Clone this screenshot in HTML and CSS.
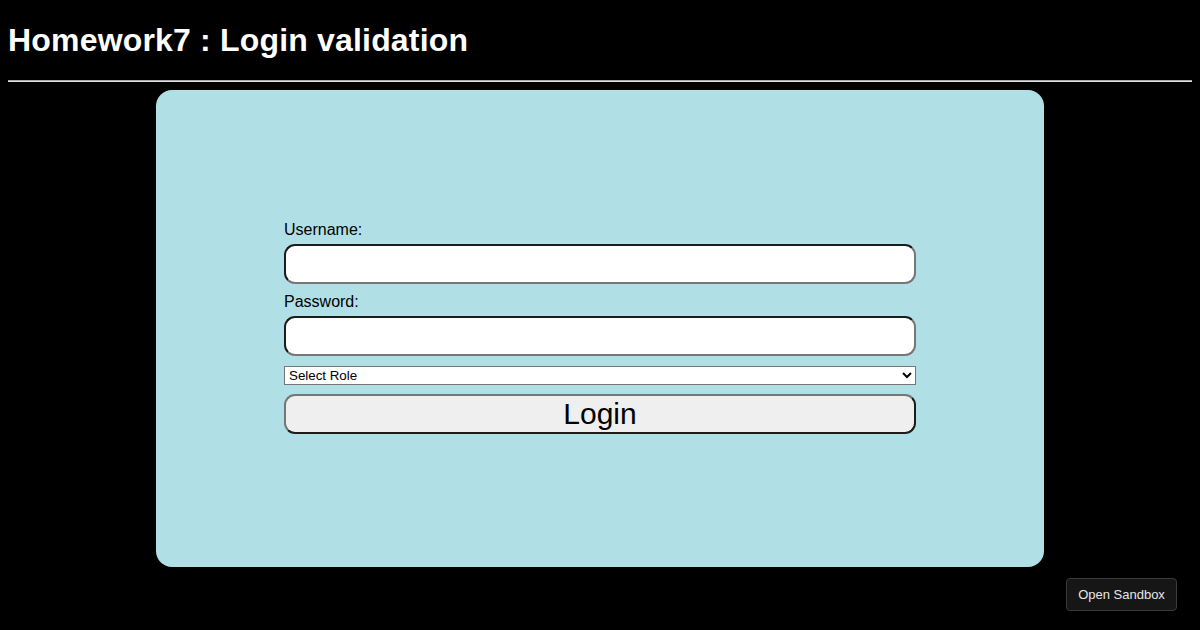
FILE: index.html
```html
<!DOCTYPE html>
<html lang="en">
<head>
<meta charset="utf-8">
<title>Homework7 : Login validation</title>
<link rel="stylesheet" href="styles.css">
</head>
<body>
<h1 class="title">Homework7 : Login validation</h1>
<hr class="rule">
<div class="card">
  <form class="login-form">
    <label class="field-label" for="username">Username:</label>
    <input class="field-input" id="username" type="text">
    <label class="field-label" for="password">Password:</label>
    <input class="field-input" id="password" type="password">
    <select class="role-select">
      <option>Select Role</option>
      <option>Admin</option>
      <option>User</option>
    </select>
    <button class="login-btn" type="button">Login</button>
  </form>
</div>
<a class="sandbox-btn">Open Sandbox</a>
</body>
</html>
```
FILE: styles.css
```css
body {
  margin: 8px;
  background: #000;
  color: #fff;
  font-family: "Liberation Sans", Arial, sans-serif;
}

.title {
  font-size: 32px;
  font-weight: bold;
  letter-spacing: 0.18px;
  margin: 13.5px 0 21.44px;
}

.rule {
  margin: 8px 0;
  border: 0;
  border-top: 1px solid #a8a8a8;
  border-bottom: 1px solid #e0e0e0;
  height: 0;
}

.card {
  width: 75%;
  margin: 0 auto;
  height: 477px;
  box-sizing: border-box;
  padding-bottom: 1px;
  background: #b0e0e6;
  border-radius: 16px;
  display: flex;
  align-items: center;
  justify-content: center;
  color: #000;
}

.login-form {
  width: 632px;
  display: flex;
  flex-direction: column;
}

.field-label {
  display: block;
  font-size: 16px;
}

.field-input {
  box-sizing: border-box;
  height: 40px;
  margin: 5px 0 9px;
  border: 2px solid;
  border-color: #1c1c1c #767676 #767676 #1c1c1c;
  border-radius: 11px;
  background: #fff;
  padding: 0 8px;
  font-size: 16px;
  font-family: "Liberation Sans", Arial, sans-serif;
}

.role-select {
  margin-top: 1px;
  height: 19px;
  font-size: 13.33px;
  font-family: "Liberation Sans", Arial, sans-serif;
  background: #fff;
  border: 1px solid #767676;
  border-radius: 0;
}

.login-btn {
  box-sizing: border-box;
  margin-top: 9px;
  height: 40px;
  padding: 0 6px;
  font-size: 30px;
  font-family: "Liberation Sans", Arial, sans-serif;
  color: #000;
  background: #efefef;
  border: 2px solid;
  border-color: #767676 #1c1c1c #1c1c1c #767676;
  border-radius: 11px;
}

.sandbox-btn {
  position: fixed;
  right: 23px;
  bottom: 19px;
  box-sizing: border-box;
  width: 111px;
  height: 33px;
  display: flex;
  align-items: center;
  justify-content: center;
  background: #161616;
  border: 1px solid #3a3a3a;
  border-radius: 4px;
  color: #e6e6e6;
  font-size: 13px;
  font-family: "Liberation Sans", Arial, sans-serif;
}
```
